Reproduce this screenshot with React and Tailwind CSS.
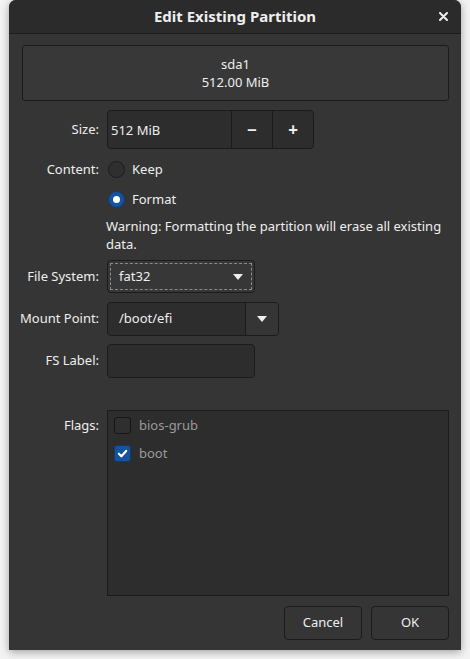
import React from 'react';

const font = { fontFamily: '"Noto Sans", "Open Sans", sans-serif' };

const Label = ({ children }) => (
    <div className="w-[79px] shrink-0 text-right whitespace-nowrap text-[13px] text-[#eeeeee]">{children}</div>
);

const Radio = ({ checked }) =>
    checked ? (
        <span className="flex h-[17px] w-[17px] items-center justify-center rounded-full border border-[#0f3b71] bg-[#15539e]">
            <span className="h-[7px] w-[7px] rounded-full bg-white" />
        </span>
    ) : (
        <span className="h-[17px] w-[17px] rounded-full border border-[#1b1b1b] bg-[#2f2f2f]" />
    );

const Check = ({ checked }) =>
    checked ? (
        <span className="flex h-[17px] w-[17px] items-center justify-center rounded-[3px] border border-[#0f3b71] bg-[#15539e]">
            <svg width="11" height="11" viewBox="0 0 12 12">
                <path d="M2 6.2 L4.8 9 L10 3.2" fill="none" stroke="white" strokeWidth="2.4" strokeLinecap="round" strokeLinejoin="round" />
            </svg>
        </span>
    ) : (
        <span className="h-[17px] w-[17px] rounded-[3px] border border-[#161616] bg-[#2f2f2f]" />
    );

const Arrow = () => (
    <svg width="10" height="6" viewBox="0 0 10 6">
        <path d="M0 0 H10 L5 6 Z" fill="#eeeeee" />
    </svg>
);

export default function App() {
    return (
        <div className="h-[659px] w-[470px] bg-[#f3f3f3] pl-[9px]" style={font}>
            <div className="flex h-[650px] w-[452px] flex-col rounded-t-[7px] bg-[#353535] text-[#eeeeee] shadow-[0_2px_8px_rgba(0,0,0,0.35)]">
                {/* Title bar */}
                <div className="relative flex h-[34px] shrink-0 items-center justify-center rounded-t-[7px] border-b border-[#1c1c1c] bg-[#2b2b2b]">
                    <span className="text-[15px] font-bold">Edit Existing Partition</span>
                    <svg className="absolute right-[13px] top-[12px]" width="9" height="9" viewBox="0 0 9 9">
                        <path d="M1 1 L8 8 M8 1 L1 8" stroke="#eeeeee" strokeWidth="2" strokeLinecap="round" />
                    </svg>
                </div>

                <div className="flex flex-1 flex-col pl-[11px] pr-[12px] pt-[11px]">
                    {/* Partition summary */}
                    <div className="ml-[2px] flex h-[56px] flex-col items-center justify-center rounded-[3px] border border-[#1b1b1b] bg-[#383838] text-[13px] leading-[18px]">
                        <span>sda1</span>
                        <span>512.00 MiB</span>
                    </div>

                    {/* Size */}
                    <div className="mt-[9px] flex items-center gap-[8px]">
                        <Label>Size:</Label>
                        <div className="flex h-[39px] w-[207px] overflow-hidden rounded-[4px] border border-[#1b1b1b] bg-[#2d2d2d] text-[13px]">
                            <div className="flex flex-1 items-center pl-[3px] pt-[2px]">512 MiB</div>
                            <div className="flex w-[41px] items-center justify-center border-l border-[#1b1b1b] text-[17px] font-bold">−</div>
                            <div className="flex w-[41px] items-center justify-center border-l border-[#1b1b1b] text-[17px] font-bold">+</div>
                        </div>
                    </div>

                    {/* Content */}
                    <div className="mt-[11px] flex items-center gap-[9px]">
                        <Label>Content:</Label>
                        <div className="flex items-center gap-[7px]">
                            <Radio />
                            <span className="text-[13px]">Keep</span>
                        </div>
                    </div>
                    <div className="mt-[10px] flex items-center gap-[9px]">
                        <div className="w-[79px]" />
                        <div className="flex items-center gap-[7px]">
                            <Radio checked />
                            <span className="text-[13px]">Format</span>
                        </div>
                    </div>
                    <div className="mt-[8px] pl-[86px] text-[13px] leading-[18px]">
                        Warning: Formatting the partition will erase all existing data.
                    </div>

                    {/* File System */}
                    <div className="mt-[7px] flex items-center gap-[8px]">
                        <Label>File System:</Label>
                        <div className="h-[33px] w-[148px] rounded-[4px] border border-[#1b1b1b] bg-[#373737] p-[2px]">
                            <div className="flex h-full items-center justify-between border border-dashed border-[#8a8a8a] pl-[8px] pr-[8px] text-[13px]">
                                <span>fat32</span>
                                <Arrow />
                            </div>
                        </div>
                    </div>

                    {/* Mount point */}
                    <div className="mt-[9px] flex items-center gap-[8px]">
                        <Label>Mount Point:</Label>
                        <div className="flex h-[34px] w-[172px] overflow-hidden rounded-[4px] border border-[#1b1b1b] bg-[#2d2d2d] text-[13px]">
                            <div className="flex flex-1 items-center pl-[11px]">/boot/efi</div>
                            <div className="flex w-[33px] items-center justify-center border-l border-[#1b1b1b] bg-[#353535]">
                                <Arrow />
                            </div>
                        </div>
                    </div>

                    {/* FS label */}
                    <div className="mt-[8px] flex items-center gap-[8px]">
                        <Label>FS Label:</Label>
                        <div className="h-[34px] w-[148px] rounded-[4px] border border-[#1b1b1b] bg-[#2d2d2d]" />
                    </div>

                    {/* Flags */}
                    <div className="mt-[32px] flex items-start gap-[8px]">
                        <div className="pt-[6px]">
                            <Label>Flags:</Label>
                        </div>
                        <div className="flex h-[186px] flex-1 flex-col gap-[8px] border border-[#1b1b1b] bg-[#2d2d2d] pl-[6px] pt-[5px] text-[13px] text-[#9a9a9a]">
                            <div className="flex items-center gap-[8px]">
                                <Check />
                                <span>bios-grub</span>
                            </div>
                            <div className="flex items-center gap-[8px]">
                                <Check checked />
                                <span>boot</span>
                            </div>
                        </div>
                    </div>

                    {/* Buttons */}
                    <div className="mt-[10px] flex justify-end gap-[9px]">
                        <button className="h-[34px] w-[78px] rounded-[4px] border border-[#1b1b1b] bg-[#353535] text-[13px] text-[#eeeeee]">Cancel</button>
                        <button className="h-[34px] w-[78px] rounded-[4px] border border-[#1b1b1b] bg-[#353535] text-[13px] text-[#eeeeee]">OK</button>
                    </div>
                </div>
            </div>
        </div>
    );
}
